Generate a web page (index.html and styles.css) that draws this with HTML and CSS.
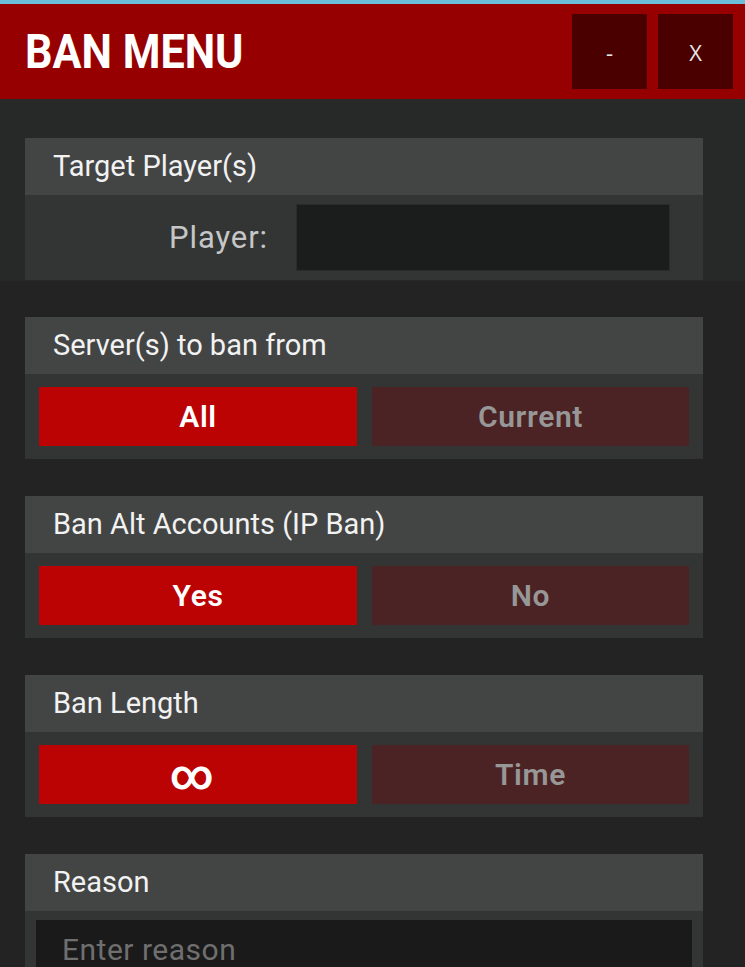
FILE: index.html
```html
<!DOCTYPE html>
<html>
<head>
<meta charset="utf-8">
<title>Ban Menu</title>
<link rel="stylesheet" href="styles.css">
</head>
<body>
<div class="topline"></div>
<header class="titlebar">
  <h1 class="title"><span>BAN MENU</span></h1>
  <div class="win-btns">
    <button class="win-btn">-</button>
    <button class="win-btn">X</button>
  </div>
</header>
<main class="content">
  <section class="section">
    <div class="sec-head">Target Player(s)</div>
    <div class="sec-body player-row">
      <label class="player-label">Player:</label>
      <div class="player-input"></div>
    </div>
  </section>
  <section class="section">
    <div class="sec-head">Server(s) to ban from</div>
    <div class="sec-body choice-row">
      <button class="choice on">All</button>
      <button class="choice off">Current</button>
    </div>
  </section>
  <section class="section">
    <div class="sec-head">Ban Alt Accounts (IP Ban)</div>
    <div class="sec-body choice-row">
      <button class="choice on">Yes</button>
      <button class="choice off">No</button>
    </div>
  </section>
  <section class="section">
    <div class="sec-head">Ban Length</div>
    <div class="sec-body choice-row">
      <button class="choice on inf">∞</button>
      <button class="choice off">Time</button>
    </div>
  </section>
  <section class="section">
    <div class="sec-head">Reason</div>
    <div class="sec-body reason-body">
      <div class="reason-input">Enter reason</div>
    </div>
  </section>
</main>
</body>
</html>
```
FILE: styles.css
```css
* { box-sizing: border-box; }
html, body { margin: 0; padding: 0; }
body {
  width: 745px;
  height: 967px;
  overflow: hidden;
  background: linear-gradient(#272929 0, #272929 281px, #232323 281px);
  font-family: Roboto, "Noto Sans", sans-serif;
}
.topline { height: 4px; background: #6bbfdb; }
.titlebar {
  height: 95px;
  background: #960000;
  display: flex;
  align-items: center;
  padding: 0 12px 0 25px;
}
.title {
  margin: 0;
  color: #fff;
  font-family: Roboto, sans-serif;
  font-weight: 700;
  font-size: 49px;
  line-height: 1;
}
.title span { display: inline-block; transform: scaleX(0.88); transform-origin: left center; }
.win-btns { margin-left: auto; display: flex; gap: 11px; }
.win-btn {
  width: 75px; height: 75px;
  border: 0; padding: 0;
  background: #4b0000;
  color: #e6e6e6;
  font-family: "Open Sans", sans-serif;
  font-size: 22px;
}
.content { padding: 39px 42px 0 25px; display: flex; flex-direction: column; gap: 37px; }
.sec-head {
  height: 57px;
  background: #434545;
  color: #f2f2f2;
  font-size: 29px;
  line-height: 57px;
  padding-left: 28px;
}
.sec-body { background: #333535; height: 85px; }
.player-row { display: flex; align-items: center; gap: 28px; }
.player-label { width: 243px; text-align: right; color: #c6c6c6; font-size: 31px; letter-spacing: 0.9px; }
.player-input { width: 374px; height: 67px; background: #1b1c1c; border: 1px solid #2a2c2c; }
.choice-row { display: grid; grid-template-columns: 318px 317px; gap: 15px; padding: 13px 14px; }
.choice {
  border: 0; height: 59px;
  font-family: Roboto, sans-serif;
  font-weight: 600;
  font-size: 30px;
  letter-spacing: 0.6px;
}
.choice.on { background: #bb0303; color: #fff; }
.choice.off { background: #4b2324; color: #979797; }
.choice.inf { font-size: 42px; font-weight: 600; line-height: 1; padding: 0 12px 0 0; }
.reason-body { height: 200px; padding: 9px 11px 0 11px; }
.reason-input {
  height: 120px;
  background: #1a1a1a;
  color: #6f6f6f;
  font-size: 30px;
  letter-spacing: 0.5px;
  padding: 12px 0 0 26px;
}
```
